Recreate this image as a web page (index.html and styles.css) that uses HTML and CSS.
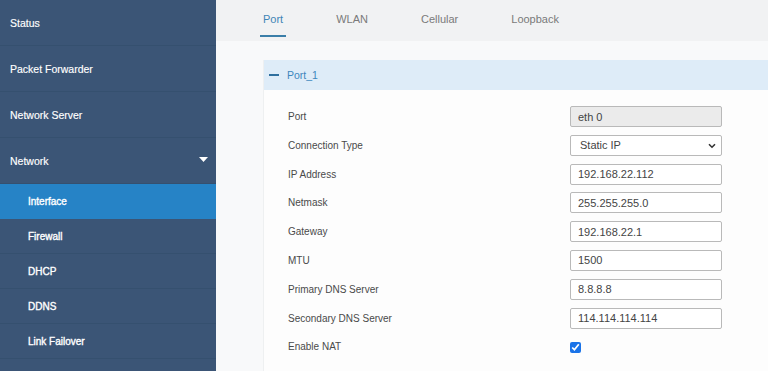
FILE: index.html
```html
<!DOCTYPE html>
<html>
<head>
<meta charset="utf-8">
<link rel="stylesheet" href="styles.css">
</head>
<body>
<div class="app">
  <nav class="sidebar">
    <div class="nav-item">Status</div>
    <div class="nav-item">Packet Forwarder</div>
    <div class="nav-item">Network Server</div>
    <div class="nav-item nav-parent">Network
      <svg class="caret" width="9" height="5" viewBox="0 0 9 5"><path d="M0 0H9L4.5 5Z" fill="#fff"/></svg>
    </div>
    <div class="nav-sub active">Interface</div>
    <div class="nav-sub">Firewall</div>
    <div class="nav-sub">DHCP</div>
    <div class="nav-sub">DDNS</div>
    <div class="nav-sub">Link Failover</div>
  </nav>
  <main class="main">
    <div class="tabs">
      <div class="tab active">Port</div>
      <div class="tab">WLAN</div>
      <div class="tab">Cellular</div>
      <div class="tab">Loopback</div>
    </div>
    <div class="content">
      <section class="panel">
        <div class="panel-head"><span class="dash"></span>Port_1</div>
        <div class="panel-body">
          <div class="row"><label>Port</label><input class="field readonly" value="eth 0" readonly></div>
          <div class="row"><label>Connection Type</label>
            <div class="select-wrap">
              <select class="field select"><option>Static IP</option></select>
              <svg class="chev" width="8" height="6" viewBox="0 0 8 6"><path d="M1 1.2L4 4.2L7 1.2" fill="none" stroke="#333" stroke-width="1.6"/></svg>
            </div>
          </div>
          <div class="row"><label>IP Address</label><input class="field" value="192.168.22.112"></div>
          <div class="row"><label>Netmask</label><input class="field" value="255.255.255.0"></div>
          <div class="row"><label>Gateway</label><input class="field" value="192.168.22.1"></div>
          <div class="row"><label>MTU</label><input class="field" value="1500"></div>
          <div class="row"><label>Primary DNS Server</label><input class="field" value="8.8.8.8"></div>
          <div class="row"><label>Secondary DNS Server</label><input class="field" value="114.114.114.114"></div>
          <div class="row"><label>Enable NAT</label><input type="checkbox" class="check" checked></div>
        </div>
      </section>
    </div>
  </main>
</div>
</body>
</html>
```
FILE: styles.css
```css
* { box-sizing: border-box; }
html, body { margin: 0; padding: 0; }
body {
  width: 768px;
  height: 371px;
  overflow: hidden;
  font-family: "Liberation Sans", Arial, sans-serif;
  background: #f8f9fa;
}
.app {
  display: flex;
  height: 371px;
}
.sidebar {
  width: 216px;
  flex: none;
  background: #3b5576;
  color: #fff;
  font-size: 10.5px;
}
.nav-item {
  height: 46px;
  display: flex;
  align-items: center;
  padding-left: 10px;
  border-bottom: 1px solid #35506f;
  -webkit-text-stroke: 0.15px #fff;
}
.nav-parent { justify-content: space-between; padding-right: 8px; }
.nav-parent .caret { margin-top: -2px; }
.nav-sub {
  height: 35px;
  display: flex;
  align-items: center;
  padding-left: 28px;
  font-size: 10px;
  -webkit-text-stroke: 0.35px #fff;
  border-bottom: 1px solid #35506f;
}
.nav-sub.active {
  background: #2683c6;
  border-bottom-color: #2683c6;
}
.main {
  flex: 1;
  display: flex;
  flex-direction: column;
  min-width: 0;
}
.tabs {
  height: 41px;
  flex: none;
  background: #f1f2f3;
  display: flex;
  gap: 47px;
  padding-left: 44px;
}
.tab {
  font-size: 11px;
  color: #7a7a7a;
  padding: 13px 3px 0;
  height: 37px;
}
.tab.active {
  color: #3f85b6;
  border-bottom: 2px solid #3a7ea8;
}
.content {
  flex: 1;
  display: flex;
  flex-direction: column;
  padding: 19px 0 0 47px;
}
.panel {
  flex: 1;
  background: #fdfdfd;
  border-left: 1px solid #eef0f1;
}
.panel-head {
  height: 30px;
  background: #deecf8;
  display: flex;
  align-items: center;
  padding-left: 5px;
  font-size: 10.5px;
  color: #3d86bd;
}
.dash {
  width: 10px;
  height: 2px;
  background: #2e6f9e;
  margin-right: 8px;
}
.panel-body {
  padding: 16px 0 0 24px;
  display: flex;
  flex-direction: column;
  gap: 7.8px;
}
.row {
  display: flex;
  align-items: center;
  height: 21px;
}
.row label {
  width: 282px;
  font-size: 10px;
  color: #4a4a4a;
}
.field {
  width: 152px;
  height: 21px;
  border: 1px solid #b9b9b9;
  border-radius: 2px;
  background: #fff;
  font-family: "Liberation Sans", Arial, sans-serif;
  font-size: 11px;
  color: #444;
  padding: 0 0 0 7px;
  margin: 0;
  outline: none;
}
.field.readonly { background: #ebebeb; }
.select-wrap { position: relative; width: 152px; height: 21px; }
.select {
  appearance: none;
  -webkit-appearance: none;
  padding-left: 9px;
}
.chev { position: absolute; right: 6px; top: 8px; }
.check {
  width: 11px;
  height: 11px;
  margin: 1px 0 0 0;
  accent-color: #1a73e8;
}
```
